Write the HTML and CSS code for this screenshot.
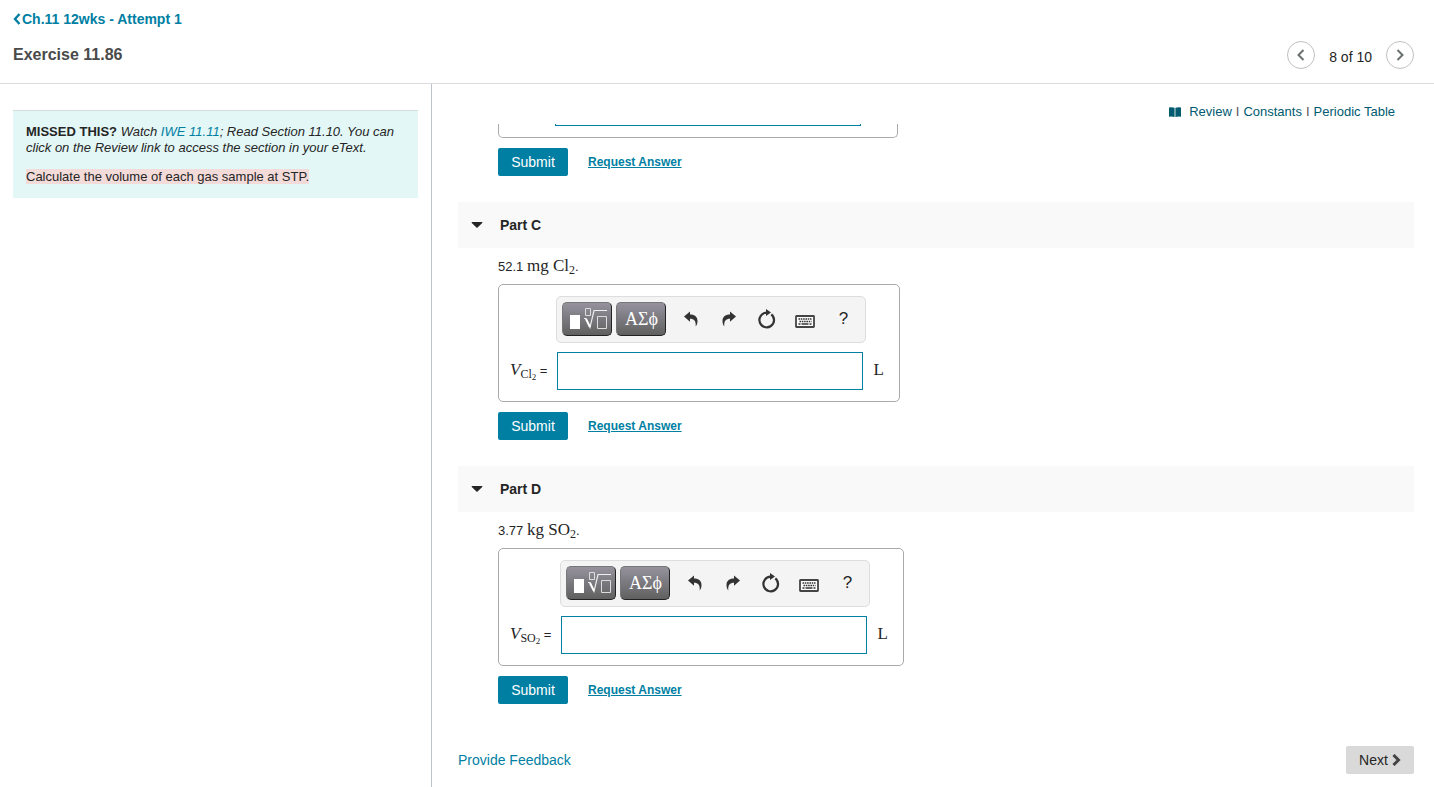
FILE: index.html
```html
<!DOCTYPE html>
<html lang="en">
<head>
    <meta charset="UTF-8">
    <meta name="viewport" content="width=device-width, initial-scale=1.0">
    <title>Exercise 11.86</title>
    <link rel="stylesheet" href="styles.css">
</head>
<body>
    <!-- shared icons -->
    <svg class="sprite" aria-hidden="true">
        <symbol id="undo" viewBox="0 0 14 16"><path d="M0 5.500 6 .5v3C11 3.500 13.500 6 13.500 10c0 2-.5 4-1.800 5.500C12.200 10 10 7.800 6 7.800v3z"/></symbol>
        <symbol id="redo" viewBox="0 0 14 16"><path d="M14 5.500 8 .5v3C3 3.500.5 6 .5 10c0 2 .5 4 1.800 5.500C1.800 10 4 7.800 8 7.800v3z"/></symbol>
        <symbol id="reset" viewBox="0 0 18 20"><path d="M13.300 5.300A7.300 7.300 0 1 1 8.500 3.700" fill="none" stroke="#333" stroke-width="2.200"/><path d="M8 0 13 3.500 8 7z"/></symbol>
        <symbol id="keyboard" viewBox="0 0 20 13"><rect x="1" y="1" width="18" height="11" rx=".5" fill="#fff" stroke="#444" stroke-width="1.800"/><path d="M3.500 4h13M4.500 6.500h12" fill="none" stroke="#333" stroke-width="1.600" stroke-dasharray="1.600 .7"/><path d="M3.500 9h2M6.500 9h7M14.500 9h2" fill="none" stroke="#333" stroke-width="1.600"/></symbol>
        <symbol id="template" viewBox="0 0 38 22"><path d="M1 7h10v14H1z" fill="#fff"/><path d="M16.500.5h5v7h-5zM28.500 8.500h9v12h-9z" fill="none" stroke="#ddd"/><path d="M15 10.500h2l4 9 4-17h13" fill="none" stroke="#eee" stroke-width="1.200"/><path d="m17 11 4 8" fill="none" stroke="#fff" stroke-width="2"/></symbol>
    </svg>

    <header class="header">
        <div>
            <a class="back" href="#"><svg width="8" height="12" viewBox="0 0 8 12"><path d="M6.500 1 2 6l4.500 5" fill="none" stroke="#007fa3" stroke-width="2.400"/></svg>Ch.11 12wks - Attempt 1</a>
            <h1>Exercise 11.86</h1>
        </div>
        <nav class="pager">
            <button type="button" aria-label="Previous item"><svg width="8" height="12" viewBox="0 0 8 12"><path d="M6.500 1 1.500 6l5 5"/></svg></button>
            <span>8 of 10</span>
            <button type="button" aria-label="Next item"><svg width="8" height="12" viewBox="0 0 8 12"><path d="m1.500 1 5 5-5 5"/></svg></button>
        </nav>
    </header>

    <div class="main">
        <aside class="sidebar">
            <div class="intro">
                <p><strong>MISSED THIS?</strong> <em>Watch <a href="#">IWE 11.11</a>; Read Section 11.10. You can click on the Review link to access the section in your eText.</em></p>
                <p><mark>Calculate the volume of each gas sample at STP.</mark></p>
            </div>
        </aside>

        <main class="content">
            <nav class="resources">
                <svg width="12" height="10" viewBox="0 0 12 10"><path d="M0 .5Q3 0 5.600.8V10Q3 9.200 0 9.700zM6.400.8Q9 0 12 .5v9.200Q9 9.200 6.400 10z" fill="#005a70"/></svg>
                <a href="#">Review</a><span>I</span><a href="#">Constants</a><span>I</span><a href="#">Periodic Table</a>
            </nav>

            <section class="part-end">
                <div class="answer-end"><input type="text" aria-label="Part B answer"></div>
                <div class="actions">
                    <button class="submit" type="button">Submit</button>
                    <a href="#">Request Answer</a>
                </div>
            </section>

            <section>
                <h2 class="part-title"><svg width="12" height="6" viewBox="0 0 12 6"><path d="M1 0h10l.5.8L6 6 .5.8z"/></svg>Part C</h2>
                <div class="part-body">
                    <p class="question">52.1 <span class="math">mg Cl<sub>2</sub></span>.</p>
                    <div class="answer">
                        <div class="toolbar">
                            <button class="palette" type="button" aria-label="Templates"><svg width="38" height="22"><use href="#template"/></svg></button>
                            <button class="palette" type="button">ΑΣϕ</button>
                            <button class="tool" type="button" aria-label="Undo"><svg width="14" height="16"><use href="#undo"/></svg></button>
                            <button class="tool" type="button" aria-label="Redo"><svg width="14" height="16"><use href="#redo"/></svg></button>
                            <button class="tool" type="button" aria-label="Reset"><svg width="18" height="20"><use href="#reset"/></svg></button>
                            <button class="tool" type="button" aria-label="Keyboard shortcuts"><svg class="kbd" width="20" height="13"><use href="#keyboard"/></svg></button>
                            <button class="tool" type="button">?</button>
                        </div>
                        <label for="volume-c"><span class="math"><i>V</i><sub>Cl<sub>2</sub></sub></span> =</label>
                        <input id="volume-c" type="text">
                        <span class="math unit">L</span>
                    </div>
                    <div class="actions">
                        <button class="submit" type="button">Submit</button>
                        <a href="#">Request Answer</a>
                    </div>
                </div>
            </section>

            <section>
                <h2 class="part-title"><svg width="12" height="6" viewBox="0 0 12 6"><path d="M1 0h10l.5.8L6 6 .5.8z"/></svg>Part D</h2>
                <div class="part-body">
                    <p class="question">3.77 <span class="math">kg SO<sub>2</sub></span>.</p>
                    <div class="answer">
                        <div class="toolbar">
                            <button class="palette" type="button" aria-label="Templates"><svg width="38" height="22"><use href="#template"/></svg></button>
                            <button class="palette" type="button">ΑΣϕ</button>
                            <button class="tool" type="button" aria-label="Undo"><svg width="14" height="16"><use href="#undo"/></svg></button>
                            <button class="tool" type="button" aria-label="Redo"><svg width="14" height="16"><use href="#redo"/></svg></button>
                            <button class="tool" type="button" aria-label="Reset"><svg width="18" height="20"><use href="#reset"/></svg></button>
                            <button class="tool" type="button" aria-label="Keyboard shortcuts"><svg class="kbd" width="20" height="13"><use href="#keyboard"/></svg></button>
                            <button class="tool" type="button">?</button>
                        </div>
                        <label for="volume-d"><span class="math"><i>V</i><sub>SO<sub>2</sub></sub></span> =</label>
                        <input id="volume-d" type="text">
                        <span class="math unit">L</span>
                    </div>
                    <div class="actions">
                        <button class="submit" type="button">Submit</button>
                        <a href="#">Request Answer</a>
                    </div>
                </div>
            </section>

            <footer class="footer">
                <a href="#">Provide Feedback</a>
                <button type="button">Next <svg width="9" height="12" viewBox="0 0 9 12"><path d="m1.500 1 5 5-5 5" fill="none" stroke="#444" stroke-width="3"/></svg></button>
            </footer>
        </main>
    </div>
</body>
</html>
```
FILE: styles.css
```css
* { box-sizing: border-box; }
body { margin: 0; min-height: 100vh; display: flex; flex-direction: column; background: #fff; color: #252525; font: 14px/16px "Liberation Sans", Arial, sans-serif; }
h1, h2, p { margin: 0; }
a { color: #007fa3; text-decoration: none; }
button, input { font: inherit; color: inherit; }
button { padding: 0; border: 0; cursor: pointer; }
.sprite { position: absolute; width: 0; height: 0; }

.header { display: flex; justify-content: space-between; align-items: flex-end; height: 84px; padding: 11px 20px 14px 13px; border-bottom: 1px solid #dcdcdc; }
.header > div { align-self: flex-start; }
.back { display: flex; align-items: center; gap: 1px; font-weight: bold; }
h1 { margin-top: 18px; font-size: 16px; line-height: 20px; color: #4a4a4a; }
.pager { display: flex; align-items: center; gap: 14px; }
.pager span { padding-top: 4px; }
.pager button { display: flex; align-items: center; justify-content: center; width: 28px; height: 28px; border: 1px solid #c0c0c0; border-radius: 50%; background: #fff; }
.pager path { fill: none; stroke: #6a7070; stroke-width: 2; }

.main { flex: 1; display: flex; }
.sidebar { flex: 0 0 432px; padding: 26px 13px; border-right: 1px solid #bbc3cc; }
.intro { padding: 13px; border-top: 1px solid #d5dddb; background: #e3f7f6; font-size: 13px; }
.intro p + p { margin-top: 13px; }
mark { background: #f2dbd9; color: inherit; }

.content { flex: 1; padding: 0 20px 13px 26px; display: flex; flex-direction: column; }
.resources { display: flex; align-items: center; justify-content: flex-end; gap: 4px; height: 40px; padding: 15px 19px 0 0; font-size: 13px; }
.resources a { color: #005a70; }
.resources svg { margin-right: 4px; }
.resources span { color: #555; }

.part-end, .part-body { padding: 0 40px 26px; }
.answer-end { display: flex; justify-content: center; align-items: flex-start; width: 400px; height: 14px; padding-right: 20px; padding-left: 40px; border: 1px solid #aaa; border-top: 0; border-radius: 0 0 5px 5px; }
.answer-end input { width: 306px; height: 2px; padding: 0; border: 1px solid #007fa3; border-top: 0; }

.part-title { display: flex; align-items: center; gap: 17px; height: 46px; padding-left: 13px; background: #f9f9f9; font-size: 14px; }
.part-title svg { fill: #252525; }
.question { height: 36px; padding-top: 7px; font-size: 13px; line-height: 22px; }
.math { font-family: "Liberation Serif", "Times New Roman", serif; font-size: 17px; }
.math sub { font-size: 12px; line-height: 0; vertical-align: -3px; }
.math sub sub { font-size: 9px; vertical-align: -2px; }

.answer { display: grid; grid-template-columns: auto 310px auto; align-items: center; row-gap: 9px; width: max-content; padding: 11px 15px 11px 11px; border: 1px solid #aaa; border-radius: 5px; }
.answer label { grid-column: 1; padding: 0 9px 2px 0; font-size: 13px; }
.answer input { width: 306px; height: 38px; margin-left: 1px; padding: 0 8px; border: 1px solid #007fa3; background: #fff; }
.unit { padding: 0 0 2px 7px; }
.toolbar { grid-column: 2; display: flex; align-items: flex-start; height: 47px; padding: 5px 0 0 5px; border: 1px solid #ddd; border-radius: 5px; background: #f4f4f4; }
.palette { display: flex; align-items: center; justify-content: center; width: 50px; height: 34px; margin-right: 4px; border: 1px solid #777; border-right-color: #222; border-bottom-color: #222; border-radius: 5px; background: linear-gradient(#95929d, #606060); color: #fff; font: 18px/20px "Liberation Serif", serif; }
.palette svg { margin-left: 2px; }
.palette + .tool { margin-left: 2px; }
.tool { display: flex; align-items: center; justify-content: center; width: 38px; height: 34px; background: none; font-size: 17px; }
.tool svg { fill: #333; }
.kbd { margin-top: 4px; }

.actions { display: flex; align-items: center; gap: 20px; margin-top: 10px; }
.actions a { font-size: 12px; font-weight: bold; text-decoration: underline; }
.submit { width: 70px; height: 28px; border-radius: 2px; background: #007fa3; color: #fff; }

.footer { display: flex; align-items: center; justify-content: space-between; margin-top: auto; }
.footer button { display: flex; align-items: center; justify-content: center; gap: 4px; width: 68px; height: 28px; border-radius: 2px; background: #d9d9d9; }
```
